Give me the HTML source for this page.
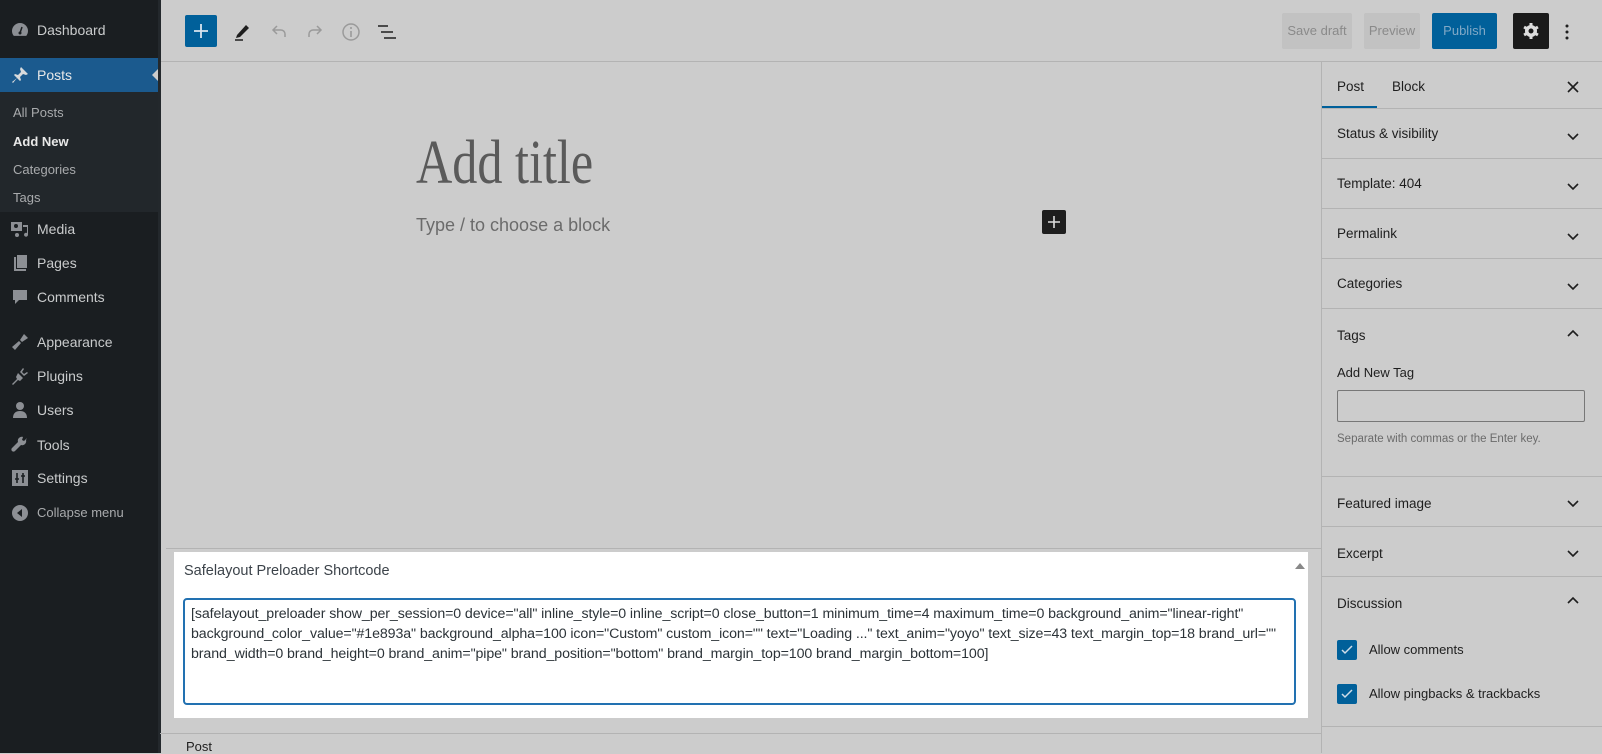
<!DOCTYPE html>
<html><head><meta charset="utf-8"><style>
*{box-sizing:border-box;margin:0;padding:0}
body{width:1602px;height:753px;overflow:hidden;background:#cccccc;font-family:"Liberation Sans",sans-serif;position:relative;color:#1e1e1e}
.abs{position:absolute}
#side{left:0;top:0;width:160px;height:753px;background:#1a1e21}
.mi{position:absolute;left:37px;font-size:14px;color:#c9cbcc;line-height:20px}
.ic{position:absolute;left:10px;width:20px;height:20px}
.sub{position:absolute;left:13px;font-size:13px;color:#a9abad;line-height:18px}
.row{position:absolute;left:1321px;width:281px;border-bottom:1px solid #b3b3b3;font-size:13.5px;color:#1e1e1e}
.row span{position:absolute;left:16px}
.chev{position:absolute;left:1566px;width:14px;height:14px}
.cb{position:absolute;left:1337px;width:20px;height:20px;background:#00609a;border-radius:2px}
</style></head><body>
<div id="side" class="abs">
  <svg class="ic" style="top:20px" viewBox="0 0 20 20"><path d="M10 3a8 8 0 0 0-8 8c0 2 .7 3.6 1.8 4.9h12.4A8 8 0 0 0 18 11a8 8 0 0 0-8-8z" fill="#8c8f94"/><path d="M10 13l2-6" stroke="#1a1e21" stroke-width="1.5"/><circle cx="10" cy="13" r="1.5" fill="#1a1e21"/></svg>
  <div class="mi" style="top:20px">Dashboard</div>
  <div class="abs" style="left:0;top:58px;width:160px;height:34px;background:#1b5a8e"></div>
  <svg class="ic" style="top:65px" viewBox="0 0 20 20"><path d="M11 2l7 7-2 1-3-1-3 3 1 3-1 1-3-3-4 5-1-1 5-4-3-3 1-1 3 1 3-3-1-3z" fill="#d8dadc"/></svg>
  <div class="mi" style="top:65px;color:#e8e8e8">Posts</div>
  <div class="abs" style="left:152px;top:67px;width:0;height:0;border-top:8px solid transparent;border-bottom:8px solid transparent;border-right:8px solid #cccccc"></div>
  <div class="abs" style="left:0;top:92px;width:160px;height:120px;background:#22272b"></div>
  <div class="sub" style="top:104px">All Posts</div>
  <div class="sub" style="top:133px;color:#e8e8e8;font-weight:bold">Add New</div>
  <div class="sub" style="top:161px">Categories</div>
  <div class="sub" style="top:189px">Tags</div>
  <svg class="ic" style="top:219px" viewBox="0 0 20 20"><rect x="1" y="3" width="11" height="9" fill="#8c8f94"/><circle cx="6" cy="7" r="2" fill="#1a1e21"/><path d="M13 6h5v10a2 2 0 1 1-1-2V8h-4z" fill="#8c8f94"/><circle cx="7" cy="16" r="2" fill="#8c8f94"/></svg>
  <div class="mi" style="top:219px">Media</div>
  <svg class="ic" style="top:253px" viewBox="0 0 20 20"><path d="M4 4h2v12h10v2H4z" fill="#8c8f94"/><rect x="7" y="2" width="10" height="13" fill="#8c8f94"/></svg>
  <div class="mi" style="top:253px">Pages</div>
  <svg class="ic" style="top:287px" viewBox="0 0 20 20"><path d="M3 3h14v10H9l-4 4v-4H3z" fill="#8c8f94"/></svg>
  <div class="mi" style="top:287px">Comments</div>
  <svg class="ic" style="top:332px" viewBox="0 0 20 20"><path d="M14 2l4 4-6 4-2-2zM9 9l2 2-6 7-3-3z" fill="#8c8f94"/></svg>
  <div class="mi" style="top:332px">Appearance</div>
  <svg class="ic" style="top:366px" viewBox="0 0 20 20"><path d="M13 2l-3 4 4 4 4-3-1-1-3 2-2-2 2-3zM8 7l5 5-3 3-2-1-5 5-1-1 5-5-1-2z" fill="#8c8f94"/></svg>
  <div class="mi" style="top:366px">Plugins</div>
  <svg class="ic" style="top:400px" viewBox="0 0 20 20"><circle cx="10" cy="6" r="4" fill="#8c8f94"/><path d="M3 18c0-5 3-7 7-7s7 2 7 7z" fill="#8c8f94"/></svg>
  <div class="mi" style="top:400px">Users</div>
  <svg class="ic" style="top:435px" viewBox="0 0 20 20"><path d="M17 3l-3 3-2-1 1-3c-3-1-6 2-5 5L2 13a2 2 0 0 0 3 3l6-6c3 1 6-2 5-5z" fill="#8c8f94"/></svg>
  <div class="mi" style="top:435px">Tools</div>
  <svg class="ic" style="top:468px" viewBox="0 0 20 20"><rect x="2" y="2" width="16" height="16" fill="#8c8f94"/><path d="M7 5v10M13 5v10M5 11h4M11 8h4" stroke="#1a1e21" stroke-width="1.6"/></svg>
  <div class="mi" style="top:468px">Settings</div>
  <svg class="ic" style="top:503px" viewBox="0 0 20 20"><circle cx="10" cy="10" r="8" fill="#8c8f94"/><path d="M12 6l-5 4 5 4z" fill="#1a1e21"/></svg>
  <div class="mi" style="top:503px;color:#a9abad;font-size:13px">Collapse menu</div>
</div>

<div class="abs" style="left:160px;top:61px;width:1442px;height:1px;background:#b3b3b3"></div>
<div class="abs" style="left:185px;top:15px;width:32px;height:32px;background:#00609a;border-radius:2px"></div>
<svg class="abs" style="left:185px;top:15px" width="32" height="32"><path d="M16 9v14M9 16h14" stroke="#d8e4ee" stroke-width="1.8"/></svg>
<svg class="abs" style="left:232px;top:20px" width="22" height="22"><path d="M5 15l9-10 3 3-9 9-4 1z" fill="#1e1e1e"/><path d="M3 20h8" stroke="#1e1e1e" stroke-width="1.5"/></svg>
<svg class="abs" style="left:268px;top:21px" width="22" height="22"><path d="M17 16v-3a4 4 0 0 0-4-4H5M9 5L5 9l4 4" fill="none" stroke="#9a9a9a" stroke-width="1.5"/></svg>
<svg class="abs" style="left:304px;top:21px" width="22" height="22"><path d="M5 16v-3a4 4 0 0 1 4-4h8M13 5l4 4-4 4" fill="none" stroke="#9a9a9a" stroke-width="1.5"/></svg>
<svg class="abs" style="left:340px;top:21px" width="22" height="22"><circle cx="11" cy="11" r="8" fill="none" stroke="#9a9a9a" stroke-width="1.5"/><path d="M11 10v6M11 6v2" stroke="#9a9a9a" stroke-width="1.6"/></svg>
<svg class="abs" style="left:376px;top:21px" width="22" height="22"><path d="M2 5h10M5 11h12M8 17h12" stroke="#1e1e1e" stroke-width="1.6"/></svg>

<div class="abs" style="left:1282px;top:13px;width:70px;height:36px;background:#c2c2c2;border-radius:2px;font-size:13px;color:#8a8a8a;text-align:center;line-height:36px">Save draft</div>
<div class="abs" style="left:1364px;top:13px;width:56px;height:36px;background:#c2c2c2;border-radius:2px;font-size:13px;color:#8a8a8a;text-align:center;line-height:36px">Preview</div>
<div class="abs" style="left:1432px;top:13px;width:65px;height:36px;background:#00609a;border-radius:2px;font-size:13px;color:#7fa8c6;text-align:center;line-height:36px">Publish</div>
<div class="abs" style="left:1513px;top:13px;width:36px;height:36px;background:#1a1a1a;border-radius:2px"></div>
<svg class="abs" style="left:1521px;top:21px" width="20" height="20" viewBox="0 0 20 20"><g fill="#ddd"><circle cx="10" cy="10" r="6"/><rect x="8.5" y="2" width="3" height="16"/><rect x="8.5" y="2" width="3" height="16" transform="rotate(60 10 10)"/><rect x="8.5" y="2" width="3" height="16" transform="rotate(120 10 10)"/></g><circle cx="10" cy="10" r="2.5" fill="#1a1a1a"/></svg>
<svg class="abs" style="left:1563px;top:21px" width="8" height="22"><circle cx="4" cy="5" r="1.5" fill="#1e1e1e"/><circle cx="4" cy="11" r="1.5" fill="#1e1e1e"/><circle cx="4" cy="17" r="1.5" fill="#1e1e1e"/></svg>

<div class="abs" style="left:416px;top:128px;font-family:'Liberation Serif',serif;font-size:62px;color:#5a5a5a;transform:scaleX(0.81);transform-origin:left;white-space:nowrap;line-height:70px">Add title</div>
<div class="abs" style="left:416px;top:213px;font-size:18px;color:#6b6b6b;line-height:24px">Type / to choose a block</div>
<div class="abs" style="left:1042px;top:210px;width:24px;height:24px;background:#1e1e1e;border-radius:2px"></div>
<svg class="abs" style="left:1042px;top:210px" width="24" height="24"><path d="M12 6v12M6 12h12" stroke="#ddd" stroke-width="1.6"/></svg>

<div class="abs" style="left:158px;top:0;width:3px;height:753px;background:#23282c"></div>
<div class="abs" style="left:166px;top:548px;width:1155px;height:1px;background:#b3b3b3"></div>
<div class="abs" style="left:174px;top:552px;width:1134px;height:166px;background:#fff"></div>
<div class="abs" style="left:184px;top:563px;font-size:14.5px;color:#3c434a">Safelayout Preloader Shortcode</div>
<div class="abs" style="left:1295px;top:563px;width:0;height:0;border-left:5px solid transparent;border-right:5px solid transparent;border-bottom:6px solid #888"></div>
<div class="abs" style="left:183px;top:598px;width:1113px;height:107px;border:2px solid #2271b1;border-radius:4px;background:#fff;padding:4px 6px;font-size:14.2px;line-height:20px;color:#2c3338;letter-spacing:-.1px">[safelayout_preloader show_per_session=0 device="all" inline_style=0 inline_script=0 close_button=1 minimum_time=4 maximum_time=0 background_anim="linear-right" background_color_value="#1e893a" background_alpha=100 icon="Custom" custom_icon="" text="Loading ..." text_anim="yoyo" text_size=43 text_margin_top=18 brand_url="" brand_width=0 brand_height=0 brand_anim="pipe" brand_position="bottom" brand_margin_top=100 brand_margin_bottom=100]</div>
<div class="abs" style="left:160px;top:733px;width:1161px;height:1px;background:#b3b3b3"></div>
<div class="abs" style="left:186px;top:739px;font-size:13px;color:#1e1e1e">Post</div>

<div class="abs" style="left:1321px;top:62px;width:1px;height:691px;background:#b3b3b3"></div>
<div class="abs" style="left:1337px;top:79px;font-size:13.5px">Post</div>
<div class="abs" style="left:1392px;top:79px;font-size:13.5px">Block</div>
<div class="abs" style="left:1322px;top:106px;width:55px;height:3px;background:#00609a"></div>
<svg class="abs" style="left:1566px;top:80px" width="14" height="14"><path d="M2 2l10 10M12 2L2 12" stroke="#1e1e1e" stroke-width="1.6"/></svg>
<div class="abs" style="left:1322px;top:108px;width:280px;height:1px;background:#b3b3b3"></div>

<div class="row" style="top:109px;height:50px"><span style="top:17px">Status &amp; visibility</span></div>
<div class="row" style="top:159px;height:50px"><span style="top:17px">Template: 404</span></div>
<div class="row" style="top:209px;height:50px"><span style="top:17px">Permalink</span></div>
<div class="row" style="top:259px;height:50px"><span style="top:17px">Categories</span></div>
<div class="row" style="top:309px;height:168px"><span style="top:19px">Tags</span></div>
<div class="abs" style="left:1337px;top:365px;font-size:13px;color:#1e1e1e">Add New Tag</div>
<div class="abs" style="left:1337px;top:390px;width:248px;height:32px;border:1px solid #777;border-radius:2px"></div>
<div class="abs" style="left:1337px;top:433px;font-size:11.5px;color:#6b6b6b">Separate with commas or the Enter key.</div>
<div class="row" style="top:477px;height:50px"><span style="top:19px">Featured image</span></div>
<div class="row" style="top:527px;height:50px"><span style="top:19px">Excerpt</span></div>
<div class="row" style="top:577px;height:150px"><span style="top:19px">Discussion</span></div>
<div class="cb" style="top:640px"></div><svg class="abs" style="left:1337px;top:640px" width="20" height="20"><path d="M5 10l3 3 7-7" fill="none" stroke="#cfdde8" stroke-width="1.5"/></svg>
<div class="abs" style="left:1369px;top:642px;font-size:13px;color:#1e1e1e">Allow comments</div>
<div class="cb" style="top:684px"></div><svg class="abs" style="left:1337px;top:684px" width="20" height="20"><path d="M5 10l3 3 7-7" fill="none" stroke="#cfdde8" stroke-width="1.5"/></svg>
<div class="abs" style="left:1369px;top:686px;font-size:13px;color:#1e1e1e">Allow pingbacks &amp; trackbacks</div>

<svg class="chev" style="top:129px" viewBox="0 0 14 14"><path d="M2 5l5 5 5-5" fill="none" stroke="#1e1e1e" stroke-width="1.6"/></svg>
<svg class="chev" style="top:179px" viewBox="0 0 14 14"><path d="M2 5l5 5 5-5" fill="none" stroke="#1e1e1e" stroke-width="1.6"/></svg>
<svg class="chev" style="top:229px" viewBox="0 0 14 14"><path d="M2 5l5 5 5-5" fill="none" stroke="#1e1e1e" stroke-width="1.6"/></svg>
<svg class="chev" style="top:279px" viewBox="0 0 14 14"><path d="M2 5l5 5 5-5" fill="none" stroke="#1e1e1e" stroke-width="1.6"/></svg>
<svg class="chev" style="top:327px" viewBox="0 0 14 14"><path d="M2 9l5-5 5 5" fill="none" stroke="#1e1e1e" stroke-width="1.6"/></svg>
<svg class="chev" style="top:496px" viewBox="0 0 14 14"><path d="M2 5l5 5 5-5" fill="none" stroke="#1e1e1e" stroke-width="1.6"/></svg>
<svg class="chev" style="top:546px" viewBox="0 0 14 14"><path d="M2 5l5 5 5-5" fill="none" stroke="#1e1e1e" stroke-width="1.6"/></svg>
<svg class="chev" style="top:594px" viewBox="0 0 14 14"><path d="M2 9l5-5 5 5" fill="none" stroke="#1e1e1e" stroke-width="1.6"/></svg>
</body></html>
